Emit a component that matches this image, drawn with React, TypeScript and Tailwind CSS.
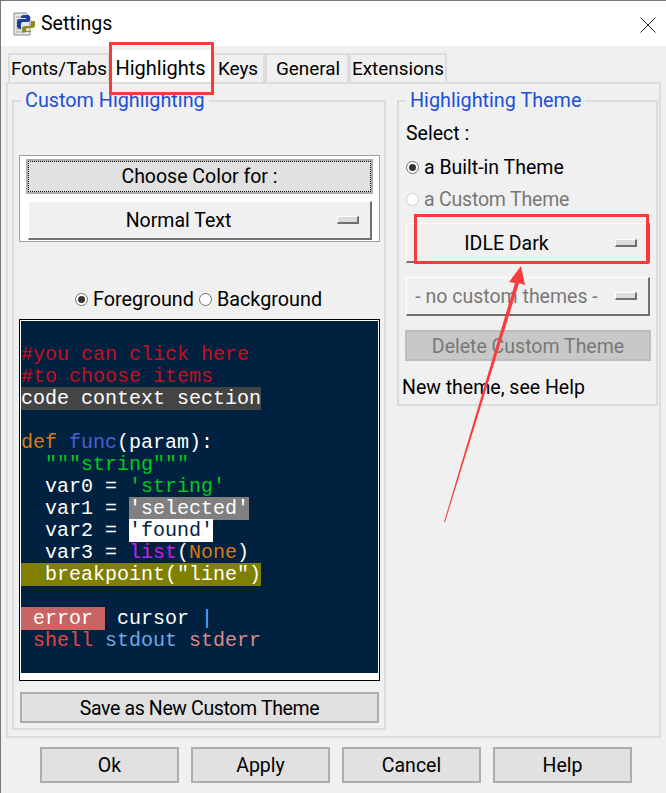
/**
 * IDLE Settings dialog, Highlights tab, with red annotations on top.
 */

import type { ReactNode } from 'react';
import clsx from 'clsx';

const mono = "font-['Liberation_Mono',monospace] text-[20px] leading-[22px] whitespace-pre";

function Radio({ checked, disabled }: { checked?: boolean; disabled?: boolean }) {
  return (
    <span
      className={clsx(
        'flex h-[13px] w-[13px] shrink-0 items-center justify-center rounded-full border',
        disabled ? 'border-[#d0d0d0] bg-white' : 'border-[#707070] bg-white'
      )}
    >
      {checked && <span className="h-[7px] w-[7px] rounded-full bg-[#333]" />}
    </span>
  );
}

function Indicator() {
  return (
    <span className="mr-[11px] ml-[9px] h-[8px] w-[22px] shrink-0 border-t border-l border-t-white border-l-white border-r-2 border-b-2 border-r-[#707070] border-b-[#707070] bg-[#dcdcdc]" />
  );
}

function MenuButton({ label, muted, className }: { label: string; muted?: boolean; className?: string }) {
  return (
    <div
      className={clsx(
        'flex items-center border-t border-l border-t-white border-l-white border-r-2 border-b-2 border-r-[#707070] border-b-[#707070]',
        className
      )}
    >
      <span className={clsx('flex-1 pt-[2px] text-center', muted ? 'text-[#787878]' : 'text-black')}>{label}</span>
      <Indicator />
    </div>
  );
}

function PushButton({ label, className }: { label: string; className?: string }) {
  return (
    <div className={clsx('flex items-center justify-center border-2 border-[#adadad] bg-[#e1e1e1] pt-[2px] text-black', className)}>
      {label}
    </div>
  );
}

function Frame({ title, titleClass, className, children }: { title: string; titleClass: string; className: string; children: ReactNode }) {
  return (
    <div className={clsx('relative border-2 border-[#dcdcdc]', className)}>
      <span className={clsx('absolute top-[-13px] bg-[#f0f0f0] px-[4px] text-[19.8px] leading-[24px] text-[#1c4fd8]', titleClass)}>
        {title}
      </span>
      {children}
    </div>
  );
}

function Tab({ label, className }: { label: string; className: string }) {
  return (
    <div className={clsx('flex h-[29px] items-center justify-center border-t-2 border-r-2 border-l-2 border-[#dcdcdc] pt-[2px] text-[18.9px] text-black', className)}>
      {label}
    </div>
  );
}

function PythonFileIcon() {
  return (
    <svg width="24" height="24" viewBox="0 0 24 24" className="shrink-0">
      <path d="M1 1h12l4 4v18H1z" fill="#e8e8e8" stroke="#8a8a8a" strokeWidth="1" />
      <path d="M3 5h8M3 8h10M3 11h5M3 14h5M3 17h5M3 20h8" stroke="#a5a5a5" strokeWidth="1" />
      <path d="M8 17v-5q0-2 2-2h5q2 0 2-2V5q0-2-3-2h-3q-3 0-3 2v1h5v1H7q-3 0-3 3v4q0 3 4 3z" fill="#1b3f93" />
      <path d="M22 9v4q0 3-3 3h-4q-2 0-2 2v1h5v1h-5q-3 1-4 0v-3q0-3 3-3h4q2 0 2-2V9z" fill="#8f8a1c" />
    </svg>
  );
}

function PreviewText() {
  return (
    <div className={clsx('bg-[#002240] pt-[23px] pb-[21px] text-white', mono)}>
      <div className="text-[#c80d1c]">#you can click here</div>
      <div className="text-[#c80d1c]">#to choose items</div>
      <div>
        <span className="bg-[#444444]">code context section</span>
      </div>
      <div>&nbsp;</div>
      <div>
        <span className="text-[#d97a10]">def</span> <span className="text-[#4a5fd8]">func</span>(param):
      </div>
      <div className="text-[#00c81e]">  """string"""</div>
      <div>
        {'  var0 = '}
        <span className="text-[#00c81e]">'string'</span>
      </div>
      <div>
        {'  var1 = '}
        <span className="bg-[#808080]">'selected'</span>
      </div>
      <div>
        {'  var2 = '}
        <span className="bg-white text-[#002240]">'found'</span>
      </div>
      <div>
        {'  var3 = '}
        <span className="text-[#c81cf0]">list</span>(<span className="text-[#d97a10]">None</span>)
      </div>
      <div>
        <span className="bg-[#808000]">  breakpoint("line")</span>
      </div>
      <div>&nbsp;</div>
      <div>
        <span className="bg-[#c86464]"> error </span> cursor <span className="text-[#6fa8e8]">|</span>
      </div>
      <div>
        {' '}
        <span className="text-[#e04848]">shell</span> <span className="text-[#6fa8e8]">stdout</span>{' '}
        <span className="text-[#d98a8a]">stderr</span>
      </div>
    </div>
  );
}

export default function App() {
  return (
    <div className="relative h-[793px] w-[666px] overflow-hidden border-t border-l border-[#777] bg-[#f0f0f0] font-['Roboto',sans-serif] text-[19.5px]">
      {/* Title bar */}
      <div className="flex h-[45px] items-center bg-white pr-[10px] pl-[12px]">
        <PythonFileIcon />
        <span className="ml-[4px] text-black">Settings</span>
        <svg width="16" height="16" viewBox="0 0 16 16" className="mt-[2px] ml-auto">
          <path d="M.5.5l15 15M15.5.5l-15 15" stroke="#222" strokeWidth="1" fill="none" />
        </svg>
      </div>

      {/* Tabs */}
      <div className="flex h-[36px] items-end pl-[7px]">
        <Tab label="Fonts/Tabs" className="w-[102px]" />
        <div className="flex h-[32px] w-[103px] items-start justify-center bg-white pr-[2px] text-[20px] leading-[36px] text-black">Highlights</div>
        <Tab label="Keys" className="w-[52px] pr-[2px]" />
        <Tab label="General" className="w-[84px] pl-[2px]" />
        <Tab label="Extensions" className="w-[98px]" />
      </div>

      {/* Notebook body */}
      <div className="ml-[5px] flex h-[656px] w-[655px] items-start border-2 border-[#dcdcdc] pt-[16px] pl-[4px]">
        <Frame title="Custom Highlighting" titleClass="left-[7px]" className="h-[630px] w-[374px] pt-[53px] pl-[5px]">
          <div className="h-[87px] w-[361px] border border-[#a0a0a0] bg-white pt-[5px] pl-[8px]">
            <div className="flex h-[31px] w-[343px] items-center justify-center border border-dotted border-black bg-[#e1e1e1] pt-[1px] outline-2 outline-[#adadad] text-black">
              Choose Color for :
            </div>
            <MenuButton label="Normal Text" className="mt-[9px] h-[39px] w-[344px] bg-[#f0f0f0]" />
          </div>
          <div className="mt-[44px] flex h-[26px] items-center pl-[56px] text-black">
            <Radio checked />
            <span className="ml-[5px] pt-[2px] text-[19.8px]">Foreground</span>
            <span className="ml-[5px] flex items-center">
              <Radio />
            </span>
            <span className="ml-[5px] pt-[2px] text-[19.8px]">Background</span>
          </div>
          <div className="mt-[7px] h-[362px] w-[361px] border border-black bg-white px-px pt-px">
            <PreviewText />
          </div>
          <PushButton label="Save as New Custom Theme" className="mt-[11px] ml-px h-[31px] w-[359px] tracking-[-0.37px]" />
        </Frame>

        <Frame title="Highlighting Theme" titleClass="left-[7px]" className="ml-[11px] h-[306px] w-[261px] pt-[19px] text-black">
          <div className="ml-[7px] h-[24px] pt-[1px] leading-[24px]">Select :</div>
          <div className="mt-[10px] ml-[7px] flex h-[24px] items-center gap-[5px]">
            <Radio checked />
            <span className="pt-[2px]">a Built-in Theme</span>
          </div>
          <div className="mt-[8px] ml-[7px] flex h-[24px] items-center gap-[5px] text-[#787878]">
            <Radio disabled />
            <span className="pt-[2px] tracking-[-0.2px]">a Custom Theme</span>
          </div>
          <MenuButton label="IDLE Dark" className="mt-[12px] ml-[7px] h-[40px] w-[244px]" />
          <MenuButton label="- no custom themes -" muted className="mt-[14px] ml-[7px] h-[39px] w-[244px]" />
          <div className="mt-[14px] ml-[6px] flex h-[31px] w-[246px] items-center justify-center border-2 border-[#bcbcbc] bg-[#c8c8c8] pt-[2px] text-[#787878]">
            Delete Custom Theme
          </div>
          <div className="mt-[14px] ml-[3px] h-[24px] pt-[1px] leading-[24px]">New theme, see Help</div>
        </Frame>
      </div>

      {/* Dialog buttons */}
      <div className="mt-[9px] flex gap-[12px] pl-[39px]">
        <PushButton label="Ok" className="h-[36px] w-[139px]" />
        <PushButton label="Apply" className="h-[36px] w-[139px]" />
        <PushButton label="Cancel" className="h-[36px] w-[139px]" />
        <PushButton label="Help" className="h-[36px] w-[139px]" />
      </div>

      {/* Red annotations */}
      <div className="absolute top-[41px] left-[108px] h-[53px] w-[105px] border-[3px] border-[#f83a3a]" />
      <div className="absolute top-[213px] left-[413px] h-[50px] w-[235px] border-[3px] border-[#f83a3a]" />
      <svg className="absolute top-[-1px] left-[-1px]" width="666" height="793" viewBox="0 0 666 793">
        <polygon points="521,266 525,285 519,283 445,522 444,522 515,283 509,282" fill="#fb3c3c" />
      </svg>
    </div>
  );
}
